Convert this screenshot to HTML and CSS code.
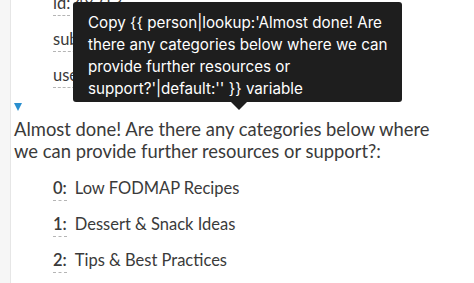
FILE: index.html
```html
<!DOCTYPE html>
<html>
<head>
<meta charset="utf-8">
<link rel="stylesheet" href="styles.css">
</head>
<body>
<div class="page">
  <div class="gutter"></div>
  <div class="main">
    <div class="scroll">
      <div class="fields">
        <div class="field"><span class="key">id:</span> <span class="val">48213</span></div>
        <div class="field"><span class="key">subscribed:</span> <span class="val">true</span></div>
        <div class="field"><span class="key">user_id:</span> <span class="val">7719</span></div>
      </div>
      <div class="toggle"><span class="tri"></span></div>
      <div class="question">Almost done! Are there any categories below where we can provide further resources or support?:</div>
      <div class="items">
        <div class="item"><span class="idx">0:</span><span class="label">Low FODMAP Recipes</span></div>
        <div class="item"><span class="idx">1:</span><span class="label">Dessert &amp; Snack Ideas</span></div>
        <div class="item"><span class="idx">2:</span><span class="label">Tips &amp; Best Practices</span></div>
      </div>
    </div>
    <div class="tooltip">Copy {{ person|lookup:'Almost done! Are there any categories below where we can provide further resources or support?'|default:'' }} variable</div>
  </div>
</div>
</body>
</html>
```
FILE: styles.css
```css
* { box-sizing: border-box; }
html, body { margin: 0; padding: 0; background: #fff; }
body { width: 474px; height: 283px; overflow: hidden; font-family: "Lato", "Open Sans", sans-serif; color: #3a3a3a; }
.page { display: flex; height: 283px; }
.gutter { width: 11px; flex: none; background: #f6f6f6; border-right: 1px solid #e6e6e6; }
.main { position: relative; flex: 1; padding-left: 3px; }
.scroll { margin-top: -20px; }
.fields { padding-left: 39px; }
.field { height: 36px; font-size: 16.5px; line-height: 20px; padding-top: 13px; white-space: nowrap; }
.key { border-bottom: 1px dashed #b5b5b5; padding-bottom: 2px; color: #3a3a3a; }
.val { color: #3a3a3a; }
.toggle { height: 30px; padding-top: 15px; }
.tri { display: block; width: 0; height: 0; border-left: 4.5px solid transparent; border-right: 4.5px solid transparent; border-top: 8px solid #2a8fcf; }
.question { font-size: 18.4px; line-height: 22px; padding-right: 20px; }
.items { padding-left: 39px; padding-top: 5px; }
.item { height: 36px; font-size: 16.5px; line-height: 20px; padding-top: 11px; white-space: nowrap; }
.idx { font-weight: 600; color: #3a3a3a; border-bottom: 1px dashed #b5b5b5; padding-bottom: 2px; margin-right: 8px; }
.tooltip { position: absolute; left: 62px; top: 2px; width: 329px; height: 100px; background: #1e1e1e; color: #fff; border-radius: 3px; font-family: "Inter", "Liberation Sans", sans-serif; font-size: 15.2px; line-height: 22px; padding: 10px 6px 0 15px; }
.tooltip::after { content: ""; position: absolute; left: 158px; bottom: -8px; border-left: 8px solid transparent; border-right: 8px solid transparent; border-top: 8px solid #1e1e1e; }
```
